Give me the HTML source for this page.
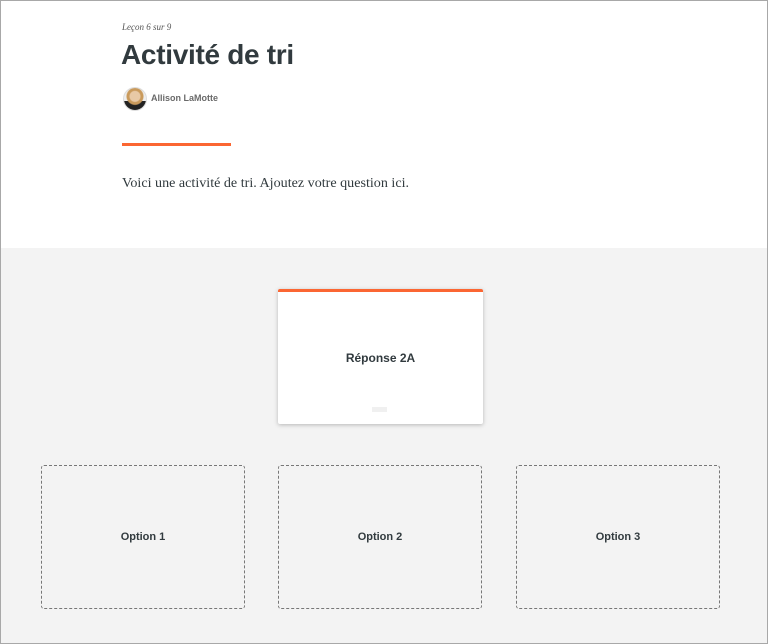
<!DOCTYPE html>
<html><head><meta charset="utf-8"><style>
*{margin:0;padding:0;box-sizing:border-box}
html,body{width:768px;height:644px;overflow:hidden;background:#fff;position:relative}
.frame{position:absolute;left:0;top:0;width:768px;height:644px;border:1px solid #a8a8a8;z-index:5}
.abs{position:absolute}
.lesson{left:122px;top:22px;font:italic 9px "Liberation Serif",serif;color:#555}
h1{position:absolute;left:121px;top:39px;font:bold 28px "Liberation Sans",sans-serif;color:#313a3e;letter-spacing:-0.3px}
.av{left:123px;top:87px;width:24px;height:24px;border-radius:50%;background:radial-gradient(circle at 50% 38%,#e8c9a6 0 5px,#c99a5c 6px 8px,transparent 9px),linear-gradient(#eee 60%,#222 60%);border:1px solid #ddd}
.name{left:151px;top:93px;font:bold 9px "Liberation Sans",sans-serif;color:#6a6a6a}
.bar{left:122px;top:143px;width:109px;height:3px;background:#fb6632}
.txt{left:122px;top:175px;font:14.1px "Liberation Serif",serif;color:#313a3e}
.gray{left:0;top:248px;width:768px;height:396px;background:#f3f3f3}
.card{left:278px;top:289px;width:205px;height:135px;background:#fff;border-top:3px solid #fb6632;border-radius:2px;box-shadow:0 1px 4px rgba(0,0,0,.25);display:flex;align-items:center;justify-content:center;font:bold 12px "Liberation Sans",sans-serif;color:#313a3e}
.card i{position:absolute;left:94px;top:115px;width:15px;height:5px;background:#f0f0f0}
.opt{top:465px;width:204px;height:144px;border:1px dashed #777;border-radius:3px;display:flex;align-items:center;justify-content:center;font:bold 11px "Liberation Sans",sans-serif;color:#313a3e}
</style></head><body>
<div class="abs lesson">Leçon 6 sur 9</div>
<h1>Activité de tri</h1>
<div class="abs av"></div>
<div class="abs name">Allison LaMotte</div>
<div class="abs bar"></div>
<div class="abs txt">Voici une activité de tri. Ajoutez votre question ici.</div>
<div class="abs gray"></div>
<div class="abs card">Réponse 2A<i></i></div>
<div class="abs opt" style="left:41px">Option 1</div>
<div class="abs opt" style="left:278px">Option 2</div>
<div class="abs opt" style="left:516px">Option 3</div>
<div class="frame"></div>
</body></html>
